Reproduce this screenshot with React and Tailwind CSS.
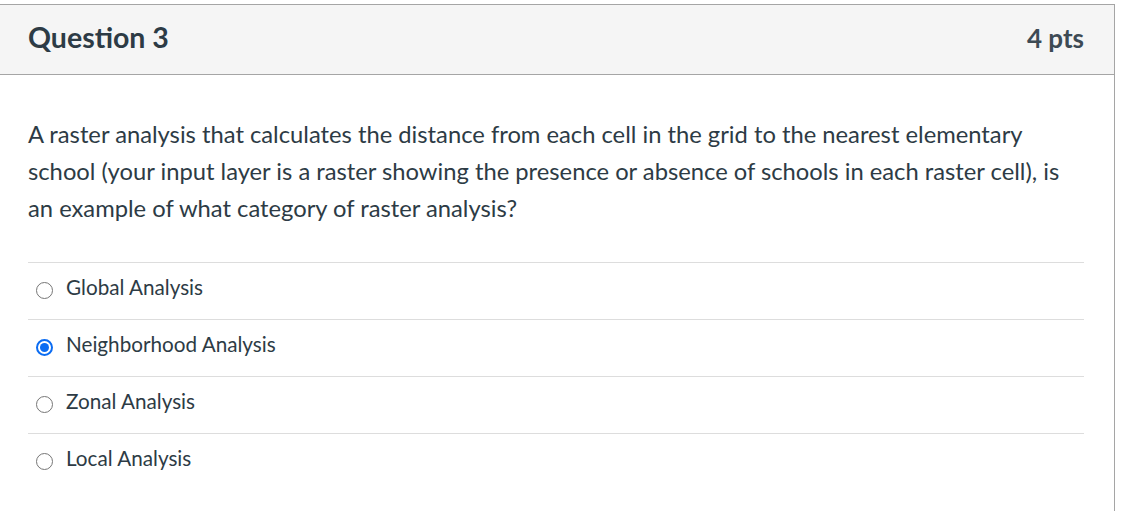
// Quiz question card
const answers = [
    { id: "a1", label: "Global Analysis", checked: false },
    { id: "a2", label: "Neighborhood Analysis", checked: true },
    { id: "a3", label: "Zonal Analysis", checked: false },
    { id: "a4", label: "Local Analysis", checked: false },
];

function Radio({ checked }) {
    return checked ? (
        <span className="mt-[19px] w-[17px] h-[17px] rounded-full border-2 border-[#0b6cf2] flex items-center justify-center shrink-0">
            <span className="w-[9px] h-[9px] rounded-full bg-[#0b6cf2]"></span>
        </span>
    ) : (
        <span className="mt-[19px] w-[17px] h-[17px] rounded-full border-[1.5px] border-[#767676] shrink-0"></span>
    );
}

export default function App() {
    return (
        <div className="min-h-screen bg-white pt-[4px] font-['Lato','Liberation_Sans',sans-serif] text-[#2d3b45]">
            <div className="w-[1115px] border-t border-r border-[#a5a5a5] h-[507px] overflow-hidden">
                {/* Header */}
                <div className="h-[70px] bg-[#f5f5f5] border-b border-[#a5a5a5] flex items-center justify-between pl-[28px] pr-[30px] pb-[4px]">
                    <h2 className="text-[28.5px] font-bold leading-none">Question 3</h2>
                    <span className="text-[26px] font-bold leading-none text-[#3d4a54]">4 pts</span>
                </div>

                {/* Body */}
                <div className="pl-[28px] pr-[30px] pt-[41px]">
                    <p className="text-[23.75px] leading-[37px]">
                        A raster analysis that calculates the distance from each cell in the grid to the nearest elementary school (your input layer is a raster showing the presence or absence of schools in each raster cell), is an example of what category of raster analysis?
                    </p>

                    <div className="mt-[35px]">
                        {answers.map((a) => (
                            <div key={a.id} className="h-[57px] border-t border-[#dddddd] flex items-start gap-[13px] pl-[8px]">
                                <Radio checked={a.checked} />
                                <span className="text-[20.7px] leading-[24px] pt-[12px]">{a.label}</span>
                            </div>
                        ))}
                    </div>
                </div>
            </div>
        </div>
    );
}
